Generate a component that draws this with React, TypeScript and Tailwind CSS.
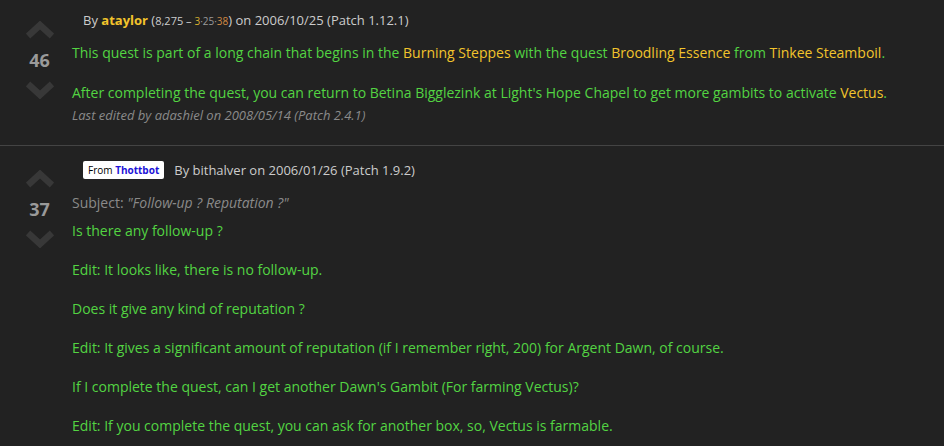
import React from 'react';

const GREEN = 'text-[#53d442]';

const Chevron = ({ down = false }: { down?: boolean }) => (
  <svg width="28" height="19" viewBox="0 0 28 19" className="block">
    <path
      d={down ? 'M2 4 L14 15 L26 4' : 'M2 15 L14 4 L26 15'}
      fill="none"
      stroke="#383838"
      strokeWidth="6.5"
    />
  </svg>
);

const Votes = ({ score, top }: { score: number; top: string }) => (
  <div className={`w-[72px] shrink-0 flex flex-col items-center pl-[7px] ${top}`}>
    <Chevron />
    <div className="mt-[9px] text-[18px] leading-[22px] font-bold text-[#9a9a9a]">{score}</div>
    <div className="mt-[9px]">
      <Chevron down />
    </div>
  </div>
);

const Y = ({ children }: { children: React.ReactNode }) => (
  <span className="text-[#f2c42c]">{children}</span>
);

export default function App() {
  return (
    <div
      className="w-[944px] h-[446px] overflow-hidden bg-[#222222] text-[13px] leading-[20px]"
      style={{ fontFamily: '"Open Sans", "Liberation Sans", sans-serif' }}
    >
      {/* First comment */}
      <div className="flex h-[145px]">
        <Votes score={46} top="pt-[21px]" />
        <div className="pt-[10px]">
          <div className="pl-[11px] text-[#cccccc]">
            By <span className="font-bold text-[#f2c42c]">ataylor</span>{' '}
            <span>(</span>
            <span className="text-[11px]">8,275 – </span>
            <span className="text-[10px] text-[#d8b030]">3</span>
            <span className="text-[10px] text-[#9a9a9a]">·25·</span>
            <span className="text-[10px] text-[#d28a45]">38</span>
            <span>) on 2006/10/25 (Patch 1.12.1)</span>
          </div>
          <div className={`mt-[12px] text-[14px] ${GREEN}`}>
            This quest is part of a long chain that begins in the <Y>Burning Steppes</Y> with the quest{' '}
            <Y>Broodling Essence</Y> from <Y>Tinkee Steamboil</Y>.
            <br />
            <br />
            After completing the quest, you can return to Betina Bigglezink at Light's Hope Chapel to get more
            gambits to activate <Y>Vectus</Y>.
          </div>
          <div className="mt-[3px] text-[13px] leading-[18px] italic text-[#8a8a8a]">
            Last edited by adashiel on 2008/05/14 (Patch 2.4.1)
          </div>
        </div>
      </div>

      <div className="h-px bg-[#444444]" />

      {/* Second comment */}
      <div className="flex">
        <Votes score={37} top="pt-[24px]" />
        <div className="pt-[14px]">
          <div className="pl-[11px] flex items-center gap-[10px] text-[#cccccc]">
            <span className="bg-white rounded-[2px] px-[5px] h-[18px] leading-[18px] text-[10px] text-black">
              From <span className="font-bold text-[#1d12d8]">Thottbot</span>
            </span>
            <span>By bithalver on 2006/01/26 (Patch 1.9.2)</span>
          </div>
          <div className="mt-[13px] text-[14px] text-[#8a8a8a]">
            Subject: <span className="italic">"Follow-up ? Reputation ?"</span>
          </div>
          <div className={`mt-[8px] text-[14px] leading-[19.5px] ${GREEN}`}>
            Is there any follow-up ?
            <br />
            <br />
            Edit: It looks like, there is no follow-up.
            <br />
            <br />
            Does it give any kind of reputation ?
            <br />
            <br />
            Edit: It gives a significant amount of reputation (if I remember right, 200) for Argent Dawn, of course.
            <br />
            <br />
            If I complete the quest, can I get another Dawn's Gambit (For farming Vectus)?
            <br />
            <br />
            Edit: If you complete the quest, you can ask for another box, so, Vectus is farmable.
          </div>
        </div>
      </div>
    </div>
  );
}
